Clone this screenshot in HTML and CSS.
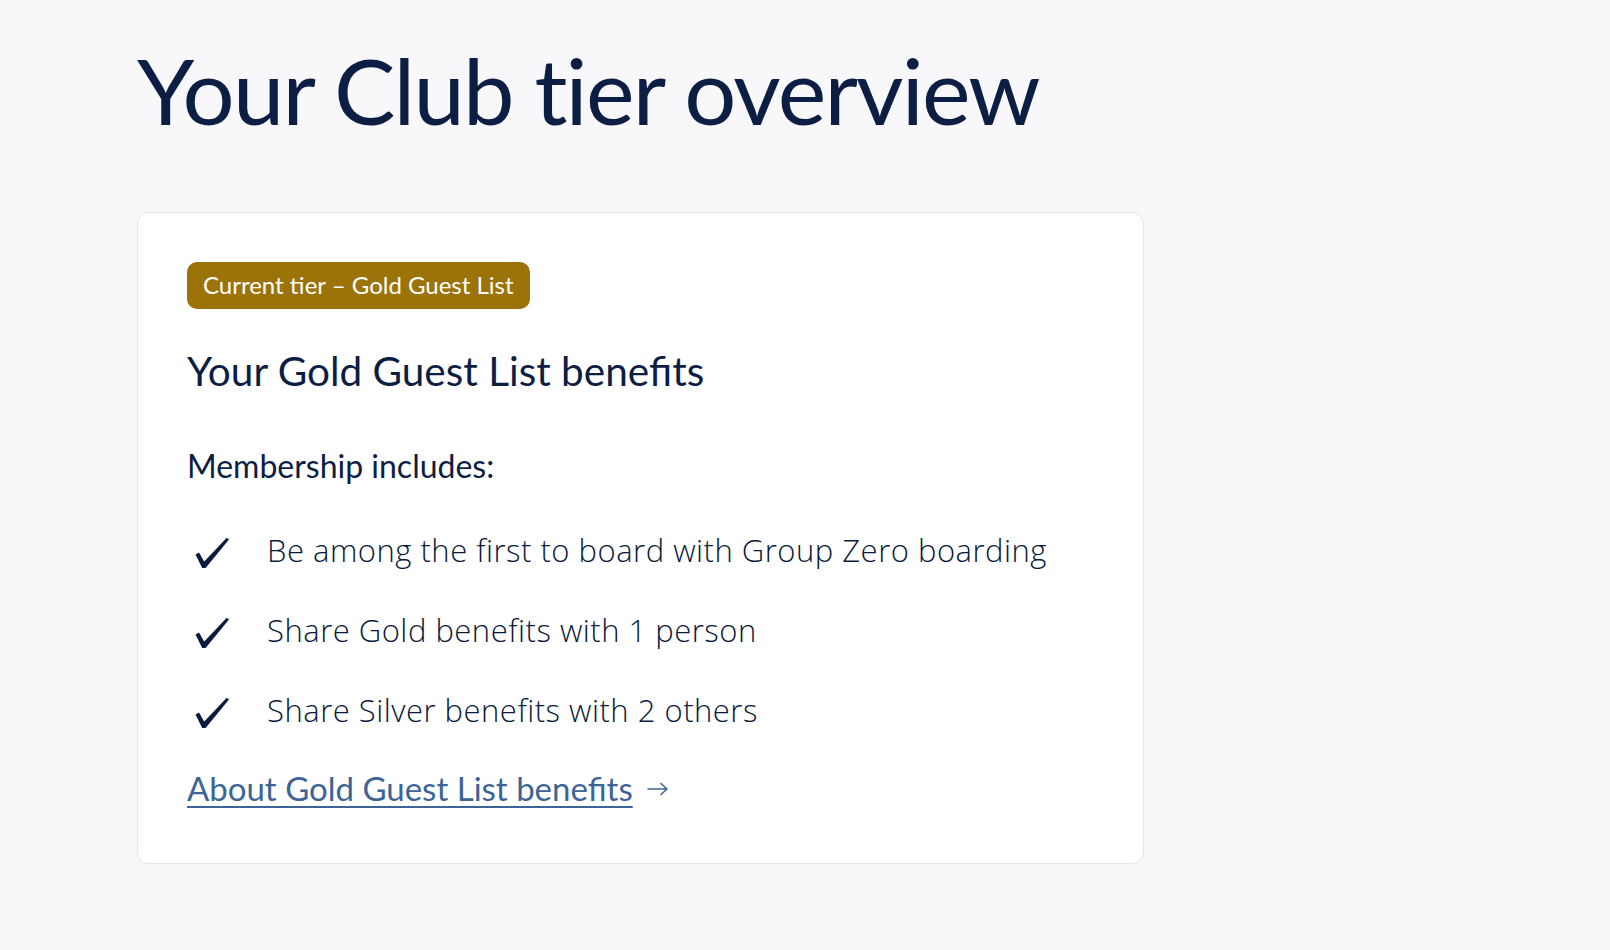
FILE: index.html
```html
<!DOCTYPE html>
<html lang="en">
<head>
<meta charset="utf-8">
<title>Your Club tier overview</title>
<link rel="stylesheet" href="styles.css">
</head>
<body>
<main class="page">
  <h1 class="title">Your Club tier overview</h1>
  <section class="card">
    <span class="badge">Current tier – Gold Guest List</span>
    <h2 class="card-heading">Your Gold Guest List benefits</h2>
    <p class="intro">Membership includes:</p>
    <ul class="benefits">
      <li class="benefit">
        <svg class="check" viewBox="0 0 36 32" aria-hidden="true"><path d="M1.5 17.5 L5 15.5 L10.2 24.5 L32.8 0.8 L35 2.6 L11.6 31 L8.2 31 Z"/></svg>
        <span>Be among the first to board with Group Zero boarding</span>
      </li>
      <li class="benefit">
        <svg class="check" viewBox="0 0 36 32" aria-hidden="true"><path d="M1.5 17.5 L5 15.5 L10.2 24.5 L32.8 0.8 L35 2.6 L11.6 31 L8.2 31 Z"/></svg>
        <span>Share Gold benefits with 1 person</span>
      </li>
      <li class="benefit">
        <svg class="check" viewBox="0 0 36 32" aria-hidden="true"><path d="M1.5 17.5 L5 15.5 L10.2 24.5 L32.8 0.8 L35 2.6 L11.6 31 L8.2 31 Z"/></svg>
        <span>Share Silver benefits with 2 others</span>
      </li>
    </ul>
    <a class="more-link" href="#"><span class="more-text">About Gold Guest List benefits</span><svg class="arrow" viewBox="0 0 22 14" aria-hidden="true"><path d="M1 7 H20 M14 1.5 L20 7 L14 12.5" fill="none" stroke="currentColor" stroke-width="1.6" stroke-linecap="round" stroke-linejoin="round"/></svg></a>
  </section>
</main>
</body>
</html>
```

FILE: styles.css
```css
* {
  box-sizing: border-box;
}

html, body {
  margin: 0;
  padding: 0;
  background: #f8f8fa;
}

body {
  font-family: "Lato", "Open Sans", sans-serif;
  color: #0c1e43;
}

.page {
  padding: 44px 0 0 137px;
}

.title {
  margin: 0;
  font-family: "Lato", sans-serif;
  font-weight: 400;
  font-size: 92px;
  line-height: 1;
  letter-spacing: -1.8px;
  color: #0c1e43;
}

.card {
  margin-top: 76px;
  width: 1007px;
  background: #ffffff;
  border: 1px solid #e3e4e7;
  border-radius: 12px;
  padding: 49px 49px 58px;
  display: flex;
  flex-direction: column;
  align-items: flex-start;
}

.badge {
  display: inline-block;
  height: 47px;
  line-height: 46px;
  padding: 0 16px;
  background: #9b7308;
  color: #ffffff;
  border-radius: 10px;
  font-size: 24px;
  font-family: "Lato", sans-serif;
}

.card-heading {
  margin: 42px 0 0;
  font-weight: 400;
  font-size: 40.5px;
  line-height: 1;
  color: #0c1e43;
}

.intro {
  margin: 58px 0 0;
  font-size: 32px;
  line-height: 1;
  color: #0c1e43;
}

.benefits {
  list-style: none;
  margin: 48px 0 0;
  padding: 0;
  display: flex;
  flex-direction: column;
  gap: 40px;
}

.benefit {
  display: flex;
  align-items: flex-start;
  font-family: "Open Sans", sans-serif;
  font-weight: 300;
  font-size: 31px;
  letter-spacing: 0.5px;
  line-height: 40px;
  color: #0a1b3d;
}

.check {
  width: 36px;
  height: 32px;
  margin: 7px 37px 0 7px;
  flex: none;
  fill: #0a1b3d;
}

.more-link {
  margin-top: 42px;
  display: inline-flex;
  align-items: center;
  color: #3c6496;
  text-decoration: none;
  font-size: 33px;
  line-height: 1;
}

.more-text {
  text-decoration: underline;
  text-decoration-thickness: 2px;
  text-underline-offset: 5px;
}

.arrow {
  width: 22px;
  height: 14px;
  margin-left: 14px;
  margin-top: 2px;
}
```
